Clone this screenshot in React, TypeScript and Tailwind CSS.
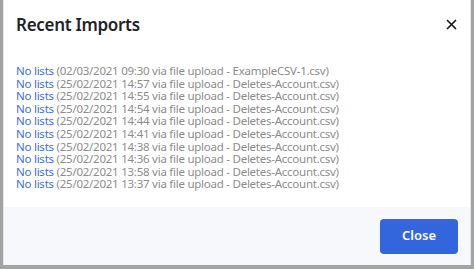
const imports = [
  { date: "02/03/2021 09:30", file: "ExampleCSV-1.csv" },
  { date: "25/02/2021 14:57", file: "Deletes-Account.csv" },
  { date: "25/02/2021 14:55", file: "Deletes-Account.csv" },
  { date: "25/02/2021 14:54", file: "Deletes-Account.csv" },
  { date: "25/02/2021 14:44", file: "Deletes-Account.csv" },
  { date: "25/02/2021 14:41", file: "Deletes-Account.csv" },
  { date: "25/02/2021 14:38", file: "Deletes-Account.csv" },
  { date: "25/02/2021 14:36", file: "Deletes-Account.csv" },
  { date: "25/02/2021 13:58", file: "Deletes-Account.csv" },
  { date: "25/02/2021 13:37", file: "Deletes-Account.csv" },
];

export default function App() {
  return (
    <div className="w-[474px] h-[269px] bg-[#a3a3a3] font-['Noto_Sans',sans-serif] overflow-hidden">
      <div className="mx-[3px] h-[265px] bg-white border-x border-[#e6e6e8] flex flex-col">
        <div className="flex items-center justify-between pl-[12px] pr-[12px] h-[49px]">
          <h2 className="text-[17px] font-semibold text-[#1f2329] tracking-[-0.3px]">
            Recent Imports
          </h2>
          <button className="w-[14px] h-[14px] flex items-center justify-center text-[#161616]">
            <svg width="11" height="11" viewBox="0 0 11 11" fill="none">
              <path d="M1 1L10 10M10 1L1 10" stroke="currentColor" strokeWidth="1.6" />
            </svg>
          </button>
        </div>
        <ul className="pl-[12px] pt-[16px] text-[11.5px] leading-[12.6px] tracking-[-0.25px] flex-1">
          {imports.map((item, i) => (
            <li key={i} className="whitespace-nowrap">
              <span className="text-[#3a6fd8]">No lists</span>{" "}
              <span className="text-[#8c8c8c]">
                ({item.date} via file upload - {item.file})
              </span>
            </li>
          ))}
        </ul>
        <div className="h-[58px] bg-[#f7f8fc] flex items-center justify-end pr-[12px]">
          <button className="w-[78px] h-[35px] rounded-[4px] bg-[#3366dd] text-white text-[13px] font-semibold">
            Close
          </button>
        </div>
      </div>
    </div>
  );
}
